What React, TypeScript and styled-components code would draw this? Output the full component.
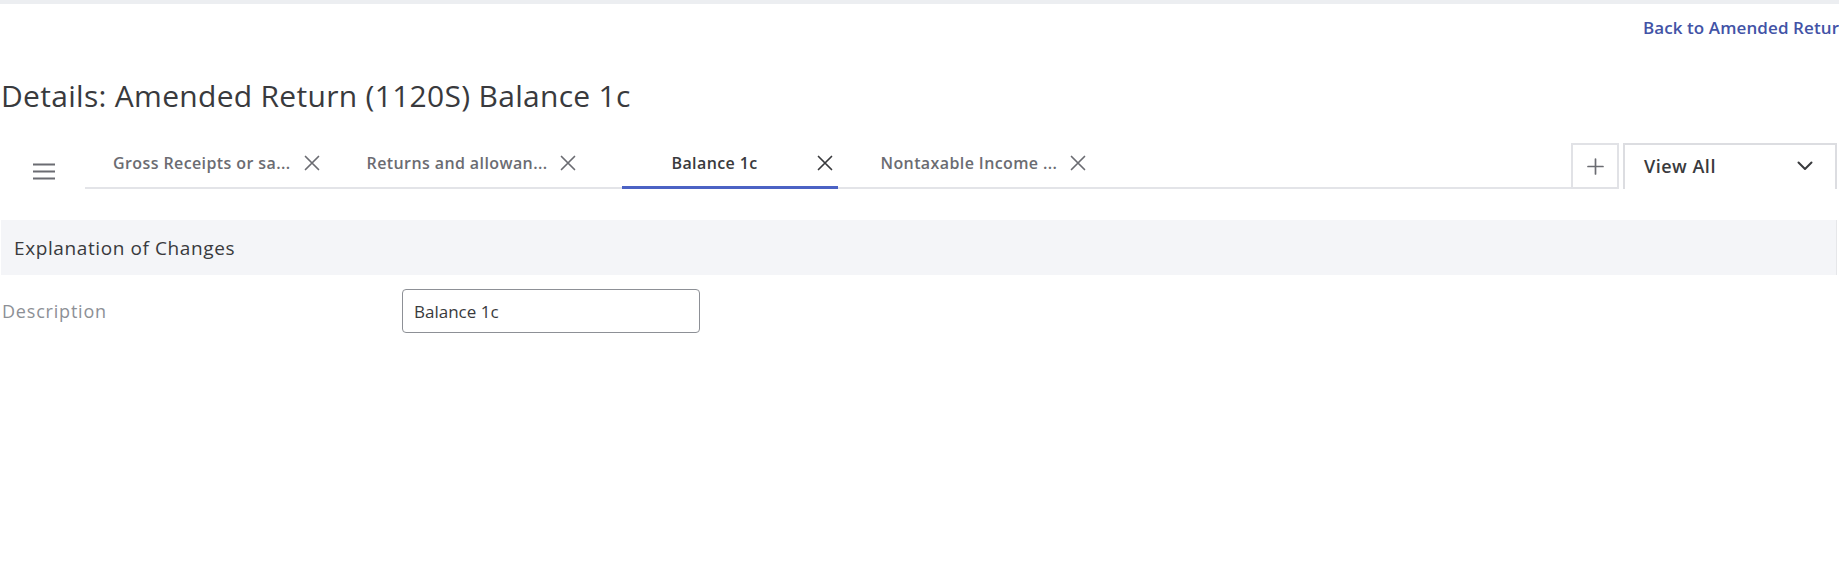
import React from 'react';
import styled, { createGlobalStyle } from 'styled-components';

const GlobalStyle = createGlobalStyle`
  html, body {
    margin: 0;
    padding: 0;
    background: #fff;
    overflow: hidden;
  }
  body {
    font-family: "Open Sans", "Liberation Sans", sans-serif;
    color: #393a3d;
  }
`;

const tabs = [
  { label: 'Gross Receipts or sa...' },
  { label: 'Returns and allowan...' },
  { label: 'Balance 1c', active: true },
  { label: 'Nontaxable Income ...' },
];

const CloseIcon = () => (
  <svg width="16" height="16" viewBox="0 0 16 16" fill="none" stroke="currentColor" strokeWidth="1.7" strokeLinecap="round">
    <path d="M1.5 1.5 L14.5 14.5 M14.5 1.5 L1.5 14.5" />
  </svg>
);

const MenuIcon = () => (
  <svg width="22" height="17" viewBox="0 0 22 17" fill="none" stroke="currentColor" strokeWidth="2">
    <path d="M0 1.5 H22 M0 8.5 H22 M0 15.5 H22" />
  </svg>
);

const PlusIcon = () => (
  <svg width="17" height="17" viewBox="0 0 17 17" fill="none" stroke="currentColor" strokeWidth="1.7" strokeLinecap="round">
    <path d="M8.5 1 V16 M1 8.5 H16" />
  </svg>
);

const ChevronIcon = () => (
  <svg width="16" height="10" viewBox="0 0 16 10" fill="none" stroke="currentColor" strokeWidth="2" strokeLinecap="round" strokeLinejoin="round">
    <path d="M1.5 1.5 L8 8 L14.5 1.5" />
  </svg>
);

const App = () => {
  return (
    <>
      <GlobalStyle />
      <TopStrip />
      <Page>
        <BackRow>
          <BackLink href="#">Back to Amended Return</BackLink>
        </BackRow>
        <Title>Details: Amended Return (1120S) Balance 1c</Title>
        <TabBar>
          <MenuCell>
            <MenuIcon />
          </MenuCell>
          <TabList>
            {tabs.map((t) => (
              <Tab key={t.label} $active={!!t.active}>
                <TabLabel>{t.label}</TabLabel>
                <CloseIcon />
              </Tab>
            ))}
          </TabList>
          <AddButton type="button">
            <PlusIcon />
          </AddButton>
          <ViewAll type="button">
            <span>View All</span>
            <ChevronIcon />
          </ViewAll>
        </TabBar>
        <SectionHeader>Explanation of Changes</SectionHeader>
        <FieldRow>
          <FieldLabel>Description</FieldLabel>
          <TextInput defaultValue="Balance 1c" />
        </FieldRow>
      </Page>
    </>
  );
};

export default App;

const TopStrip = styled.div`
  height: 4px;
  background: #eceef1;
`;

const Page = styled.div`
  padding: 0 2px 0 1px;
`;

const BackRow = styled.div`
  display: flex;
  justify-content: flex-end;
  padding-top: 12px;
  margin-right: -13px;
  white-space: nowrap;
`;

const BackLink = styled.a`
  font-size: 17px;
  line-height: 24px;
  font-weight: 600;
  letter-spacing: 0.1px;
  color: #4253a6;
  text-decoration: none;
`;

const Title = styled.h1`
  margin: 38px 0 0 0;
  font-size: 30px;
  line-height: 36px;
  font-weight: 400;
  letter-spacing: 0.3px;
  color: #393a3d;
`;

const TabBar = styled.div`
  display: flex;
  align-items: stretch;
  height: 46px;
  margin-top: 29px;
`;

const MenuCell = styled.div`
  width: 84px;
  display: flex;
  align-items: flex-end;
  padding: 0 0 9px 32px;
  box-sizing: border-box;
  color: #6b6c72;
`;

const TabList = styled.div`
  flex: 1;
  display: flex;
  align-items: stretch;
  border-bottom: 2px solid #e3e4e8;
`;

const Tab = styled.div<{ $active: boolean }>`
  display: flex;
  align-items: center;
  justify-content: space-between;
  gap: 13px;
  box-sizing: border-box;
  padding: ${(p) => (p.$active ? '0 5px 4px 49px' : '0 19px 4px 28px')};
  margin: ${(p) => (p.$active ? '0 14px -2px 27px' : '0 0 -2px 0')};
  width: ${(p) => (p.$active ? '216px' : 'auto')};
  border-bottom: 3px solid ${(p) => (p.$active ? '#4b62c4' : 'transparent')};
  color: ${(p) => (p.$active ? '#393a3d' : '#6b6c72')};
  font-size: 16px;
  font-weight: 600;
  letter-spacing: 0.4px;
  white-space: nowrap;
`;

const TabLabel = styled.span`
  line-height: 20px;
`;

const AddButton = styled.button`
  width: 48px;
  height: 46px;
  box-sizing: border-box;
  border: 2px solid #e1e2e6;
  background: #fff;
  color: #6b6c72;
  display: flex;
  align-items: center;
  justify-content: center;
  padding: 0;
`;

const ViewAll = styled.button`
  margin-left: 4px;
  width: 214px;
  height: 46px;
  box-sizing: border-box;
  border: 2px solid #dcdde1;
  border-bottom: none;
  background: #fff;
  color: #393a3d;
  display: flex;
  align-items: center;
  justify-content: space-between;
  padding: 0 22px 2px 19px;
  font-family: inherit;
  font-size: 18px;
  font-weight: 600;
  letter-spacing: 0.5px;
`;

const SectionHeader = styled.div`
  margin-top: 31px;
  height: 55px;
  display: flex;
  align-items: center;
  padding-left: 13px;
  background: #f4f5f8;
  border-right: 1px solid #e6e7ea;
  font-size: 19px;
  font-weight: 500;
  letter-spacing: 0.6px;
  color: #393a3d;
`;

const FieldRow = styled.div`
  display: flex;
  align-items: center;
  margin-top: 14px;
`;

const FieldLabel = styled.label`
  width: 400px;
  padding-left: 1px;
  font-size: 18px;
  letter-spacing: 0.8px;
  color: #8d9096;
`;

const TextInput = styled.input`
  width: 298px;
  height: 44px;
  box-sizing: border-box;
  border: 1px solid #8d9096;
  border-radius: 4px;
  padding: 0 11px;
  font-family: inherit;
  font-size: 17px;
  color: #393a3d;
  outline: none;
`;
